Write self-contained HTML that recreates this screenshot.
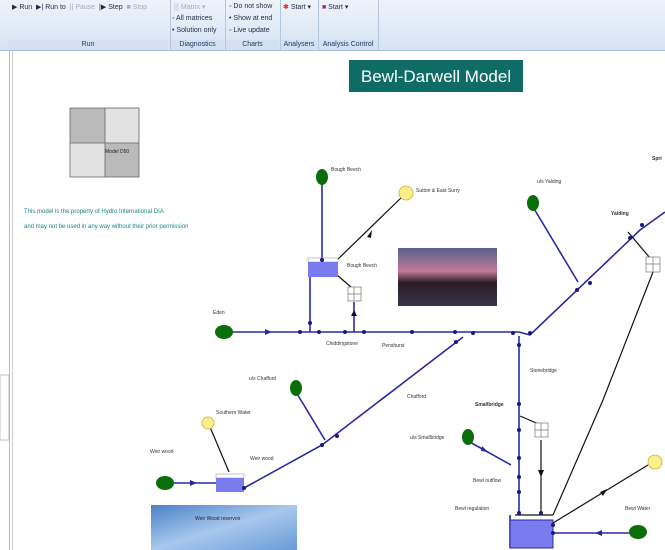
<!DOCTYPE html>
<html><head><meta charset="utf-8"><style>
body{margin:0;width:665px;height:550px;overflow:hidden;background:#fff;font-family:"Liberation Sans",sans-serif}
.rb{position:absolute;left:0;top:0;width:665px;height:50px;background:linear-gradient(#eef3fa,#d6e3f3);border-bottom:1px solid #a9bcd6}
.t{position:absolute;font-size:7px;color:#1e2a40;white-space:nowrap}
.g{position:absolute;top:40px;height:10px;font-size:7px;color:#1e3a66;text-align:center;background:#d3e0f1;line-height:10px}
.sep{position:absolute;top:0;width:1px;height:50px;background:#b3c6df}
</style></head><body>
<div class="rb">
<div class="t" style="left:12px;top:3px">▶ Run &nbsp;▶| Run to &nbsp;<span style="color:#aab">|| Pause</span> &nbsp;|▶ Step &nbsp;<span style="color:#aab">■ Stop</span></div>
<div class="t" style="left:174px;top:3px;color:#aab">▒ Matrix ▾</div>
<div class="t" style="left:172px;top:15px">◦ All matrices</div>
<div class="t" style="left:172px;top:27px">• Solution only</div>
<div class="t" style="left:229px;top:3px">◦ Do not show</div>
<div class="t" style="left:229px;top:15px">• Show at end</div>
<div class="t" style="left:229px;top:27px">◦ Live update</div>
<div class="t" style="left:283px;top:3px"><span style="color:#d22">✱</span> Start ▾</div>
<div class="t" style="left:322px;top:3px"><span style="color:#a0208a">■</span> Start ▾</div>
<div class="g" style="left:8px;width:160px">Run</div>
<div class="g" style="left:171px;width:53px">Diagnostics</div>
<div class="g" style="left:226px;width:53px">Charts</div>
<div class="g" style="left:281px;width:36px">Analysers</div>
<div class="g" style="left:319px;width:58px">Analysis Control</div>
<div class="sep" style="left:170px"></div><div class="sep" style="left:225px"></div><div class="sep" style="left:280px"></div><div class="sep" style="left:318px"></div><div class="sep" style="left:378px"></div>
</div>
<svg width="665" height="550" style="position:absolute;left:0;top:0" font-family="Liberation Sans" font-size="5">
<rect x="9" y="51" width="1" height="499" fill="#bbb"/><rect x="12" y="51" width="1" height="499" fill="#ccc"/>
<rect x="0" y="375" width="9" height="65" fill="none" stroke="#aaa" stroke-width="0.7"/>
<rect x="349" y="60" width="174" height="32" fill="#0f6b66"/>
<text x="436" y="82" font-size="17" fill="#fff" text-anchor="middle">Bewl-Darwell Model</text>
<rect x="70" y="108" width="35" height="35" fill="#bababa"/><rect x="105" y="108" width="34" height="35" fill="#e2e2e2"/>
<rect x="70" y="143" width="35" height="34" fill="#e2e2e2"/><rect x="105" y="143" width="34" height="34" fill="#bababa"/>
<rect x="70" y="108" width="69" height="69" fill="none" stroke="#666" stroke-width="0.8"/><path d="M105 108V177M70 143H139" stroke="#666" stroke-width="0.8"/>
<text x="105" y="153" fill="#222">Model D50</text>
<text x="24" y="213" font-size="6" fill="#1a8585">This model is the property of Hydro International DIA</text>
<text x="24" y="228" font-size="6" fill="#1a8585">and may not be used in any way without their prior permission</text>
<defs><linearGradient id="sun" x1="0" y1="0" x2="0" y2="1"><stop offset="0" stop-color="#5a5f8a"/><stop offset=".4" stop-color="#c07a98"/><stop offset=".6" stop-color="#2a1c28"/><stop offset="1" stop-color="#3a3448"/></linearGradient>
<linearGradient id="sky" x1="0" y1="0" x2="1" y2="1"><stop offset="0" stop-color="#4a80c8"/><stop offset=".5" stop-color="#a8c8ec"/><stop offset="1" stop-color="#6a9ad8"/></linearGradient></defs>
<rect x="398" y="248" width="99" height="58" fill="url(#sun)"/>
<rect x="151" y="505" width="146" height="45" fill="url(#sky)"/><text x="195" y="520" fill="#223">Weir Wood reservoir</text>
<g stroke="#2a2aa0" stroke-width="1.6" fill="none">
<path d="M232 332H519L530 335L640 230L665 212"/>
<path d="M519 336V515"/><path d="M463 337L322 445L244 488"/>
<path d="M296 392L325 440"/><path d="M322 180V262"/><path d="M310 277V332"/>
<path d="M354 302V332"/><path d="M533 207L578 282"/>
<path d="M174 483H216"/><path d="M468 441L511 465"/><path d="M631 533H553"/>
<path d="M510 515V548"/>
</g>
<g fill="#2a2aa0"><path d="M265 329L272 332L265 335Z"/><path d="M190 480L197 483L190 486Z"/><path d="M602 530L595 533L602 536Z"/><path d="M482 446L488 452L481 451Z"/></g>
<g stroke="#111" stroke-width="1.2" fill="none">
<path d="M336 261L403 196"/><path d="M337 275L351 287"/><path d="M210 427L229 472"/>
<path d="M653 272L603 400L553 515"/><path d="M541 440V513"/><path d="M515 515H553"/>
<path d="M553 523L648 465"/><path d="M628 232L650 258"/><path d="M520 416L541 425"/>
</g>
<g fill="#111"><path d="M367 237L372 230L371 238Z"/><path d="M538 470L541 477L544 470Z"/><path d="M600 492L607 489L603 496Z"/><path d="M351 316L354 310L357 316Z"/></g>
<rect x="308" y="258" width="30" height="4" fill="#fff" stroke="#888" stroke-width=".5"/>
<rect x="308" y="262" width="30" height="15" fill="#7b7bf0"/>
<rect x="216" y="474" width="28" height="4" fill="#fff" stroke="#888" stroke-width=".5"/>
<rect x="216" y="478" width="28" height="14" fill="#7b7bf0"/>
<rect x="510" y="520" width="43" height="28" fill="#7b7bf0" stroke="#2a2aa0"/>
<g fill="#fff" stroke="#777" stroke-width=".7">
<rect x="348" y="287" width="13" height="14"/><rect x="535" y="423" width="13" height="14"/><rect x="646" y="257" width="14" height="15"/>
</g>
<path d="M348 294H361M354 287V301M535 430H548M541 423V437M646 264H660M653 257V272" stroke="#777" stroke-width=".7"/>
<g fill="#0a6e0a">
<ellipse cx="224" cy="332" rx="9" ry="7"/><ellipse cx="322" cy="177" rx="6" ry="8"/><ellipse cx="296" cy="388" rx="6" ry="8"/>
<ellipse cx="165" cy="483" rx="9" ry="7"/><ellipse cx="468" cy="437" rx="6" ry="8"/><ellipse cx="533" cy="203" rx="6" ry="8"/>
<ellipse cx="638" cy="532" rx="9" ry="7"/>
</g>
<g fill="#fdf08a" stroke="#c8b040" stroke-width=".8">
<circle cx="406" cy="193" r="7"/><circle cx="208" cy="423" r="6"/><circle cx="655" cy="462" r="7"/>
</g>
<g fill="#1a1a80">
<circle cx="300" cy="332" r="2"/><circle cx="319" cy="332" r="2"/><circle cx="345" cy="332" r="2"/><circle cx="364" cy="332" r="2"/><circle cx="412" cy="332" r="2"/><circle cx="455" cy="332" r="2"/><circle cx="473" cy="333" r="2"/><circle cx="513" cy="333" r="2"/><circle cx="530" cy="333" r="2"/>
<circle cx="310" cy="323" r="2"/><circle cx="322" cy="260" r="2"/><circle cx="519" cy="345" r="2"/><circle cx="519" cy="404" r="2"/><circle cx="519" cy="430" r="2"/><circle cx="519" cy="458" r="2"/><circle cx="519" cy="477" r="2"/><circle cx="519" cy="492" r="2"/>
<circle cx="322" cy="445" r="2"/><circle cx="337" cy="436" r="2"/><circle cx="456" cy="342" r="2"/><circle cx="244" cy="488" r="2"/>
<circle cx="577" cy="290" r="2"/><circle cx="590" cy="283" r="2"/><circle cx="630" cy="238" r="2"/><circle cx="642" cy="225" r="2"/>
<circle cx="553" cy="525" r="2"/><circle cx="553" cy="533" r="2"/><circle cx="541" cy="513" r="2"/><circle cx="519" cy="513" r="2"/>
</g>
<g fill="#333">
<text x="331" y="171">Bough Beech</text><text x="416" y="192">Sutton &amp; East Surry</text><text x="347" y="267">Bough Beech</text>
<text x="213" y="314">Eden</text><text x="326" y="345">Chiddingstone</text><text x="382" y="347">Penshurst</text>
<text x="249" y="380">u/s Chafford</text><text x="407" y="398">Chafford</text><text x="216" y="414">Southern Water</text>
<text x="150" y="453">Weir wood</text><text x="250" y="460">Weir wood</text><text x="537" y="183">u/s Yalding</text>
<text x="530" y="372">Stonebridge</text><text x="410" y="439">u/s Smallbridge</text><text x="473" y="482">Bewl outflow</text>
<text x="455" y="510">Bewl regulation</text><text x="625" y="510">Bewl Water</text>
<text x="475" y="406" font-weight="bold">Smallbridge</text><text x="611" y="215" font-weight="bold">Yalding</text><text x="652" y="160" font-weight="bold">Spri</text>
</g>
</svg>
</body></html>
